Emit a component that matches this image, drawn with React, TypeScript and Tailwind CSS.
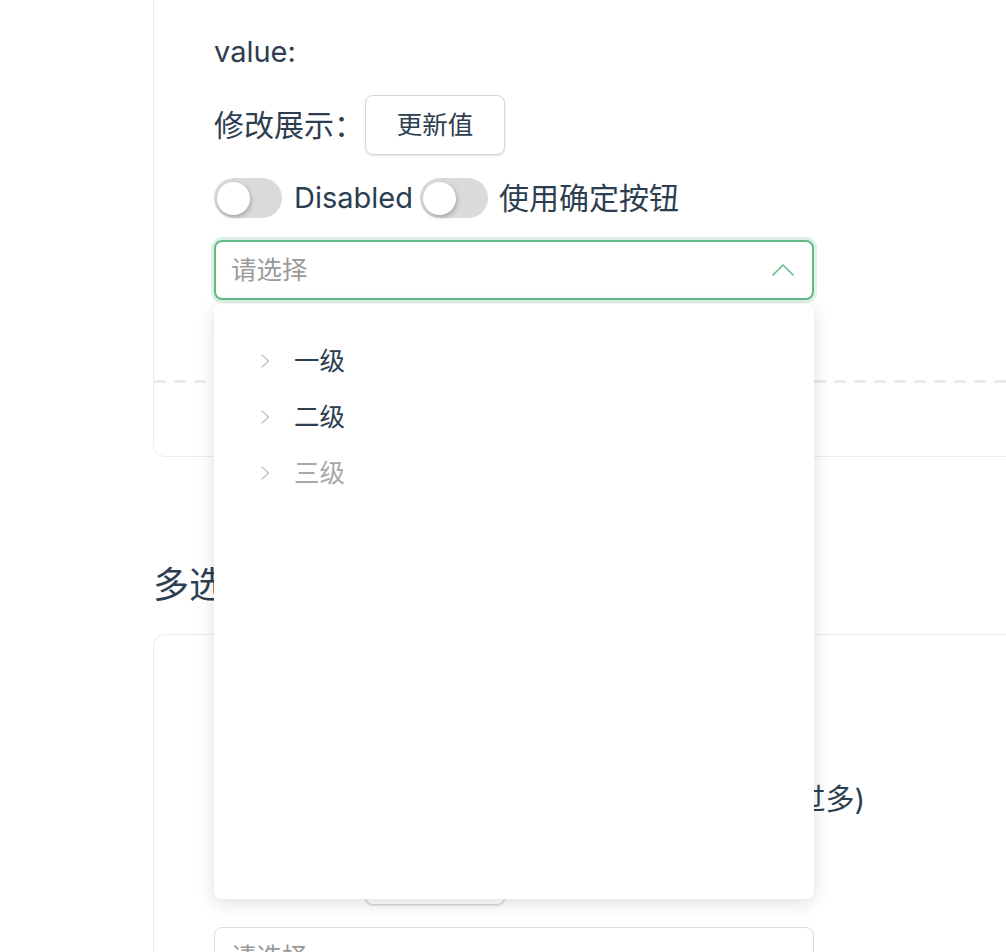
import { useState } from "react";

const font = "font-['Inter','Noto_Sans_CJK_SC',sans-serif]";

function Toggle() {
  return (
    <div className="w-[68px] h-[40px] rounded-full bg-[#dadada] flex items-center shrink-0">
      <div className="ml-[3px] w-[33px] h-[33px] rounded-full bg-white shadow-[1px_2px_4px_rgba(0,0,0,0.25)]" />
    </div>
  );
}

function ChevronRight() {
  return (
    <svg width="10" height="16" viewBox="0 0 10 16" fill="none">
      <path d="M1.5 1.5 L8.5 8 L1.5 14.5" stroke="#c4c4c4" strokeWidth="1.4" />
    </svg>
  );
}

export default function App() {
  const [open] = useState(true);
  const options = [
    { label: "一级", disabled: false },
    { label: "二级", disabled: false },
    { label: "三级", disabled: true },
  ];

  return (
    <div className={`${font} w-full h-[952px] overflow-hidden bg-white text-[#2c3e50]`}>
      <div className="pl-[153px]">
        {/* ── Demo card: 单选 ── */}
        <div className="-mt-[40px] w-[1000px] border border-[#ececec] rounded-[12px]">
          <div className="pt-[61px] pb-[80px] pl-[60px]">
            <div className="h-[60px] flex items-center text-[29px]">value:</div>

            <div className="mt-[13px] h-[60px] flex items-center">
              <span className="text-[30px]">修改展示：</span>
              <button className="ml-[1px] w-[140px] h-[60px] rounded-[8px] border border-[#d6d6d6] bg-white shadow-[0_1px_2px_rgba(0,0,0,0.12)] text-[25.5px] text-[#2c3e50]">
                更新值
              </button>
            </div>

            <div className="mt-[13px] h-[60px] flex items-center text-[29px]">
              <Toggle />
              <span className="ml-[12px]">Disabled</span>
              <div className="ml-[7px]">
                <Toggle />
              </div>
              <span className="ml-[11px] text-[30px]">使用确定按钮</span>
            </div>

            <div className="relative z-20 mt-[12px] w-[600px]">
              <div className="h-[60px] rounded-[8px] border-2 border-[#62b986] shadow-[0_0_0_3px_#ddf1e5] flex items-center justify-between pl-[15px] pr-[17px]">
                <span className="text-[25.5px] text-[#9a9a9a]">请选择</span>
                <svg width="24" height="14" viewBox="0 0 24 14" fill="none">
                  <path d="M1.5 12.5 L12 2 L22.5 12.5" stroke="#62b986" strokeWidth="1.5" />
                </svg>
              </div>

              {open && (
                <div className="absolute left-0 top-[64px] w-[600px] h-[595px] bg-white rounded-[8px] shadow-[0_4px_18px_rgba(0,0,0,0.13)] pt-[29px]">
                  {options.map((o) => (
                    <div key={o.label} className="h-[56px] flex items-center pl-[46px]">
                      <ChevronRight />
                      <span
                        className={`ml-[24px] text-[25.5px] ${o.disabled ? "text-[#a8a8a8]" : "text-[#2c3e50]"}`}
                      >
                        {o.label}
                      </span>
                    </div>
                  ))}
                </div>
              )}
            </div>
          </div>

          <div className="h-[3px] bg-[linear-gradient(to_right,#ebebeb_12px,transparent_12px)] bg-[length:20px_3px]" />
          <div className="h-[73px]" />
        </div>

        {/* ── 多选 ── */}
        <h3 className="mt-[103px] h-[50px] flex items-center text-[36px] font-normal text-[#2c3e50]">
          多选
        </h3>

        <div className="mt-[24px] w-[1000px] h-[400px] border border-[#ececec] rounded-[12px]">
          <div className="pt-[65px] pl-[60px]">
            <div className="h-[60px] flex items-center text-[29px]">value: []</div>
            <div className="mt-[10px] h-[60px] flex items-center justify-end w-[651px] text-[29px] whitespace-nowrap">
              折叠标签展示（选中项过多)
            </div>
            <div className="mt-[15px] h-[60px] flex items-center">
              <span className="text-[30px]">修改展示：</span>
              <button className="ml-[1px] w-[140px] h-[60px] rounded-[8px] border border-[#d6d6d6] bg-white shadow-[0_1px_2px_rgba(0,0,0,0.12)] text-[25.5px] text-[#2c3e50]">
                更新值
              </button>
            </div>
            <div className="mt-[22px] w-[600px] h-[60px] rounded-[8px] border border-[#dcdcdc] flex items-center pl-[16px]">
              <span className="text-[25.5px] text-[#9a9a9a]">请选择</span>
            </div>
          </div>
        </div>
      </div>
    </div>
  );
}
